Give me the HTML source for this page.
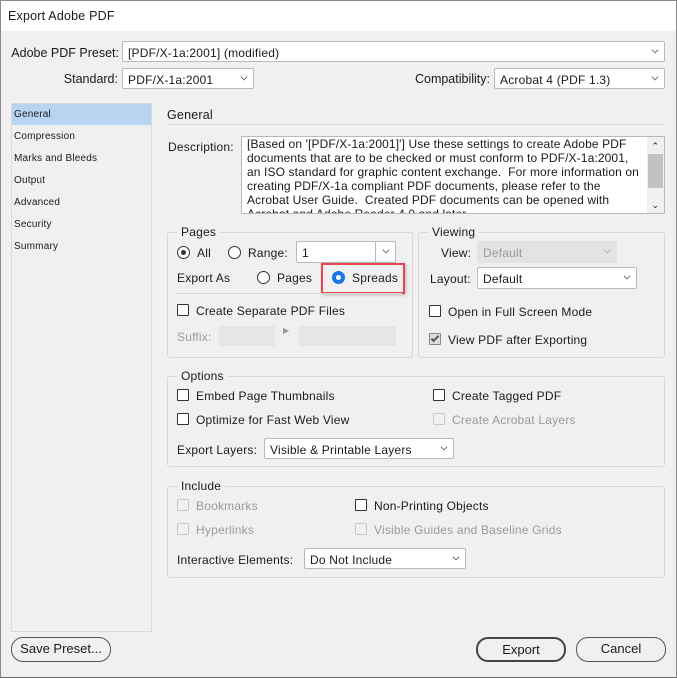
<!DOCTYPE html>
<html><head><style>
*{margin:0;padding:0;box-sizing:border-box}
body{width:677px;height:678px;overflow:hidden;background:#f0f0f0;font-family:"Liberation Sans",sans-serif;font-size:12px;color:#1a1a1a;position:relative}
.a{position:absolute;white-space:nowrap}
.t{position:absolute;white-space:nowrap;line-height:14px;letter-spacing:.2px}
.r{position:absolute;white-space:nowrap;line-height:14px;font-size:12.5px;text-align:right}
.g{color:#9a9a9a}
.sel{position:absolute;background:#fff;border:1px solid #b9b9b9;border-radius:2px}
.sel .v{position:absolute;left:5px;top:4px;line-height:14px;letter-spacing:.2px}
.sel .c{position:absolute;right:6px;top:5px;width:6px;height:6px;border-right:1px solid #555;border-bottom:1px solid #555;transform:rotate(45deg) scale(.8)}
.box{position:absolute;border:1px solid #d6d6d6;border-radius:3px}
.lg{position:absolute;background:#f0f0f0;padding:0 4px;line-height:14px;top:-8px;left:9px;letter-spacing:.2px}
.cb{position:absolute;width:12px;height:12px;border:1px solid #333;background:#fff;border-radius:1px}
.cb.d{border-color:#c8c8c8;background:#f0f0f0}
.rd{position:absolute;width:13px;height:13px;border:1px solid #333;border-radius:50%;background:#fff}
.btn{position:absolute;border:1px solid #555;border-radius:12px;text-align:center;line-height:22px;font-size:13px;background:#f0f0f0}
</style></head><body>
<div class="a" style="left:0;top:0;width:677px;height:31px;background:#fff"></div>
<div class="t" style="left:8px;top:9px;font-size:12.5px">Export Adobe PDF</div>
<div class="a" style="left:0;top:0;width:677px;height:678px;border:1px solid #8a8a8a;border-bottom-color:#666"></div>

<div class="r" style="left:0;width:119px;top:46px">Adobe PDF Preset:</div>
<div class="sel" style="left:122px;top:41px;width:543px;height:21px"><span class="v">[PDF/X-1a:2001] (modified)</span><i class="c"></i></div>
<div class="r" style="left:0;width:118px;top:72px">Standard:</div>
<div class="sel" style="left:122px;top:68px;width:132px;height:21px"><span class="v">PDF/X-1a:2001</span><i class="c"></i></div>
<div class="r" style="left:300px;width:190px;top:72px">Compatibility:</div>
<div class="sel" style="left:494px;top:68px;width:171px;height:21px"><span class="v">Acrobat 4 (PDF 1.3)</span><i class="c"></i></div>

<div class="a" style="left:11px;top:103px;width:141px;height:529px;border:1px solid #d9d9d9"></div>
<div class="a" style="left:12px;top:104px;width:139px;height:21px;background:#b9d4f0"></div>
<div class="t" style="left:14px;top:108px;font-size:10px">General</div>
<div class="t" style="left:14px;top:130px;font-size:10px">Compression</div>
<div class="t" style="left:14px;top:152px;font-size:10px">Marks and Bleeds</div>
<div class="t" style="left:14px;top:174px;font-size:10px">Output</div>
<div class="t" style="left:14px;top:196px;font-size:10px">Advanced</div>
<div class="t" style="left:14px;top:218px;font-size:10px">Security</div>
<div class="t" style="left:14px;top:240px;font-size:10px">Summary</div>

<div class="t" style="left:167px;top:108px;font-size:12.5px">General</div>
<div class="a" style="left:167px;top:124px;width:498px;height:1px;background:#d8d8d8"></div>

<div class="t" style="left:168px;top:140px">Description:</div>
<div class="a" style="left:241px;top:136px;width:424px;height:78px;background:#fff;border:1px solid #b9b9b9;overflow:hidden">
<div style="position:absolute;left:5px;top:0;line-height:14px;font-size:12px;white-space:nowrap;letter-spacing:.12px">[Based on '[PDF/X-1a:2001]'] Use these settings to create Adobe PDF<br>documents that are to be checked or must conform to PDF/X-1a:2001,<br>an ISO standard for graphic content exchange.&nbsp; For more information on<br>creating PDF/X-1a compliant PDF documents, please refer to the<br>Acrobat User Guide.&nbsp; Created PDF documents can be opened with<br>Acrobat and Adobe Reader 4.0 and later.</div>
<div style="position:absolute;right:0;top:0;width:17px;height:76px;background:#f0f0f0"></div>
<div style="position:absolute;right:1px;top:17px;width:15px;height:34px;background:#c2c2c2"></div>
<div style="position:absolute;right:5px;top:5px;font-size:9px;line-height:9px">&#8963;</div>
<div style="position:absolute;right:5px;top:64px;font-size:9px;line-height:9px">&#8964;</div>
</div>

<div class="box" style="left:167px;top:232px;width:246px;height:126px"><span class="lg">Pages</span></div>
<div class="rd" style="left:177px;top:246px;background:#fff"><div style="position:absolute;left:3px;top:3px;width:5px;height:5px;border-radius:50%;background:#333"></div></div>
<div class="t" style="left:197px;top:246px">All</div>
<div class="rd" style="left:228px;top:246px"></div>
<div class="t" style="left:248px;top:246px">Range:</div>
<div class="sel" style="left:296px;top:241px;width:100px;height:22px"><span class="v">1</span><div style="position:absolute;left:78px;top:0;width:1px;height:20px;background:#b9b9b9"></div><i class="c"></i></div>
<div class="t" style="left:177px;top:271px">Export As</div>
<div class="rd" style="left:257px;top:271px"></div>
<div class="t" style="left:277px;top:271px">Pages</div>
<div class="a" style="left:321px;top:263px;width:84px;height:31px;border:2px solid #e8484c;box-shadow:1px 1px 3px rgba(0,0,0,.25)"></div>
<div class="rd" style="left:332px;top:271px;border-color:#1a73e8;background:#1a73e8"><div style="position:absolute;left:3px;top:3px;width:5px;height:5px;border-radius:50%;background:#fff"></div></div>
<div class="t" style="left:352px;top:271px">Spreads</div>
<div class="a" style="left:176px;top:293px;width:226px;height:1px;background:#d8d8d8"></div>
<div class="cb" style="left:177px;top:304px"></div>
<div class="t" style="left:196px;top:304px">Create Separate PDF Files</div>
<div class="t g" style="left:177px;top:330px">Suffix:</div>
<div class="a" style="left:219px;top:326px;width:56px;height:20px;background:#e6e6e6"></div>
<div class="a g" style="left:283px;top:326px;font-size:8px">&#9654;</div>
<div class="a" style="left:299px;top:326px;width:97px;height:20px;background:#e6e6e6"></div>

<div class="box" style="left:418px;top:232px;width:247px;height:126px"><span class="lg">Viewing</span></div>
<div class="t" style="left:441px;top:246px">View:</div>
<div class="sel" style="left:477px;top:241px;width:140px;height:22px;background:#e3e3e3;border-color:#e3e3e3"><span class="v g">Default</span><i class="c" style="border-color:#aaa"></i></div>
<div class="t" style="left:430px;top:272px">Layout:</div>
<div class="sel" style="left:477px;top:267px;width:160px;height:22px"><span class="v">Default</span><i class="c"></i></div>
<div class="cb" style="left:429px;top:305px"></div>
<div class="t" style="left:448px;top:305px">Open in Full Screen Mode</div>
<div class="cb" style="left:429px;top:333px;border-color:#888;background:#ddd"><div style="position:absolute;left:3px;top:0;width:4px;height:8px;border-right:2px solid #555;border-bottom:2px solid #555;transform:rotate(45deg)"></div></div>
<div class="t" style="left:448px;top:333px">View PDF after Exporting</div>

<div class="box" style="left:167px;top:376px;width:498px;height:91px"><span class="lg">Options</span></div>
<div class="cb" style="left:177px;top:389px"></div>
<div class="t" style="left:196px;top:389px">Embed Page Thumbnails</div>
<div class="cb" style="left:433px;top:389px"></div>
<div class="t" style="left:452px;top:389px">Create Tagged PDF</div>
<div class="cb" style="left:177px;top:413px"></div>
<div class="t" style="left:196px;top:413px">Optimize for Fast Web View</div>
<div class="cb d" style="left:433px;top:413px"></div>
<div class="t g" style="left:452px;top:413px">Create Acrobat Layers</div>
<div class="t" style="left:177px;top:443px">Export Layers:</div>
<div class="sel" style="left:264px;top:438px;width:190px;height:21px"><span class="v">Visible &amp; Printable Layers</span><i class="c"></i></div>

<div class="box" style="left:167px;top:486px;width:498px;height:92px"><span class="lg">Include</span></div>
<div class="cb d" style="left:177px;top:499px"></div>
<div class="t g" style="left:196px;top:499px">Bookmarks</div>
<div class="cb" style="left:355px;top:499px"></div>
<div class="t" style="left:374px;top:499px">Non-Printing Objects</div>
<div class="cb d" style="left:177px;top:523px"></div>
<div class="t g" style="left:196px;top:523px">Hyperlinks</div>
<div class="cb d" style="left:355px;top:523px"></div>
<div class="t g" style="left:374px;top:523px">Visible Guides and Baseline Grids</div>
<div class="t" style="left:177px;top:553px">Interactive Elements:</div>
<div class="sel" style="left:304px;top:548px;width:162px;height:21px"><span class="v">Do Not Include</span><i class="c"></i></div>

<div class="btn" style="left:11px;top:637px;width:100px;height:25px">Save Preset...</div>
<div class="btn" style="left:476px;top:637px;width:90px;height:25px;border:2px solid #444">Export</div>
<div class="btn" style="left:576px;top:637px;width:90px;height:25px">Cancel</div>
</body></html>
